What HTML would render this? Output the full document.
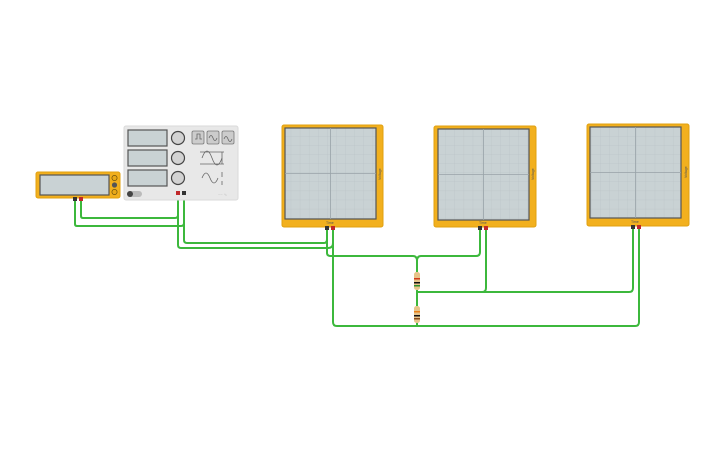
<!DOCTYPE html>
<html><head><style>body{margin:0;background:#fff;width:725px;height:453px;overflow:hidden}</style></head><body>
<svg width="725" height="453" viewBox="0 0 725 453" xmlns="http://www.w3.org/2000/svg" font-family="Liberation Sans, sans-serif">
<defs>
<pattern id="g" width="9.1" height="9.1" patternUnits="userSpaceOnUse"><path d="M9.1 0V9.1H0" fill="none" stroke="#b6bec2" stroke-width="0.5"/></pattern>
</defs>
<g fill="none" stroke="#3cb83c" stroke-width="2" stroke-linejoin="round">
<path d="M81 200V216Q81 218 83 218H175Q178 218 178 215V195"/>
<path d="M75 200V224Q75 226 77 226H181Q184 226 184 223V195"/>
<path d="M178 195V245Q178 248 181 248H328Q333 248 333 243V229"/>
<path d="M184 195V240Q184 243 187 243H324Q327 243 327 239V229"/>
<path d="M327 229V253Q327 256 331 256H413Q417 256 417 261V272"/>
<path d="M480 229V252Q480 256 476 256H421Q417 256 417 261"/>
<path d="M417 290V306"/>
<path d="M417 292H482Q486 292 486 288V229"/>
<path d="M417 292H629Q633 292 633 288V228"/>
<path d="M333 229V322Q333 326 337 326H635Q639 326 639 322V228"/>
<path d="M417 322V326"/>
</g>
<g>
<rect x="414" y="272" width="6" height="18" rx="2.5" fill="#e6c48a"/>
<rect x="414" y="278" width="6" height="1.5" fill="#d03a1a"/>
<rect x="414" y="282" width="6" height="1.5" fill="#111"/>
<rect x="414" y="285" width="6" height="1.5" fill="#2f8f2f"/>
<rect x="414" y="306" width="6" height="17" rx="2.5" fill="#e6c48a"/>
<rect x="414" y="311" width="6" height="1.5" fill="#e8801a"/>
<rect x="414" y="315" width="6" height="1.5" fill="#111"/>
<rect x="414" y="318" width="6" height="1.5" fill="#8a4a1a"/>
</g>
<rect x="36" y="172" width="84" height="26" rx="2" fill="#f2b01e" stroke="#e0a010"/>
<rect x="40" y="175" width="69" height="20" fill="#c9d2d4" stroke="#555" stroke-width="1.2"/>
<circle cx="114.5" cy="178" r="2.6" fill="#e8a818" stroke="#6a5010" stroke-width="0.7"/>
<circle cx="114.5" cy="185" r="2.6" fill="#555"/>
<circle cx="114.5" cy="192" r="2.6" fill="#e8a818" stroke="#6a5010" stroke-width="0.7"/>
<rect x="73" y="197" width="4" height="4" fill="#333"/>
<rect x="79" y="197" width="4" height="4" fill="#c0282a"/>
<rect x="124" y="126" width="114" height="74" rx="2" fill="#e8e8e8" stroke="#dadada"/>
<g fill="#c9d2d4" stroke="#555" stroke-width="1.2">
<rect x="128" y="130" width="39" height="16"/><rect x="128" y="150" width="39" height="16"/><rect x="128" y="170" width="39" height="16"/>
</g>
<g fill="#d2d2d2" stroke="#444" stroke-width="1.2">
<circle cx="178" cy="138" r="6.5"/><circle cx="178" cy="158" r="6.5"/><circle cx="178" cy="178" r="6.5"/>
</g>
<g fill="#ccc" stroke="#777" stroke-width="0.8">
<rect x="192" y="131" width="12" height="13" rx="1.5"/><rect x="207" y="131" width="12" height="13" rx="1.5"/><rect x="222" y="131" width="12" height="13" rx="1.5"/>
</g>
<g fill="none" stroke="#666" stroke-width="0.8">
<path d="M195 139h2v-5h3v5h2"/><path d="M209 138q2-5 4 0t4 0"/><path d="M224 139q2-5 4 0t4 0"/>
<path d="M202 158q5-14 10 0t10 0"/><path d="M200 152h24M200 164h24M222 152v12"/>
<path d="M202 178q4-10 8 0t8 0"/><path d="M222 172v5M222 181v4"/>
</g>
<rect x="127" y="191" width="15" height="6" rx="3" fill="#bbb"/><circle cx="130" cy="194" r="3" fill="#444"/>
<text x="218" y="196" font-size="4" fill="#bbb">~~ ∿</text>
<rect x="176" y="191" width="4" height="4" fill="#c0282a"/>
<rect x="182" y="191" width="4" height="4" fill="#333"/>
<g>
<rect x="282" y="125" width="101" height="102" rx="2" fill="#f2b01e" stroke="#e0a010"/>
<rect x="285" y="128" width="91" height="91" fill="#c9d2d4"/><rect x="285" y="128" width="91" height="91" fill="url(#g)" stroke="#555" stroke-width="1.2"/>
<path d="M330.5 128v91M285 173.5h91" stroke="#99a3a8" stroke-width="0.8"/>
<text x="326" y="224" font-size="3.5" fill="#555">Time</text>
<text transform="translate(381,180) rotate(-90)" font-size="3.5" fill="#555">Voltage</text>
<rect x="325" y="226" width="4" height="4" fill="#333"/><rect x="331" y="226" width="4" height="4" fill="#c0282a"/>
</g>
<g>
<rect x="434" y="126" width="102" height="101" rx="2" fill="#f2b01e" stroke="#e0a010"/>
<rect x="438" y="129" width="91" height="91" fill="#c9d2d4"/><rect x="438" y="129" width="91" height="91" fill="url(#g)" stroke="#555" stroke-width="1.2"/>
<path d="M483.5 129v91M438 174.5h91" stroke="#99a3a8" stroke-width="0.8"/>
<text x="479" y="224" font-size="3.5" fill="#555">Time</text>
<text transform="translate(534,180) rotate(-90)" font-size="3.5" fill="#555">Voltage</text>
<rect x="478" y="226" width="4" height="4" fill="#333"/><rect x="484" y="226" width="4" height="4" fill="#c0282a"/>
</g>
<g>
<rect x="587" y="124" width="102" height="102" rx="2" fill="#f2b01e" stroke="#e0a010"/>
<rect x="590" y="127" width="91" height="91" fill="#c9d2d4"/><rect x="590" y="127" width="91" height="91" fill="url(#g)" stroke="#555" stroke-width="1.2"/>
<path d="M635.5 127v91M590 172.5h91" stroke="#99a3a8" stroke-width="0.8"/>
<text x="631" y="223" font-size="3.5" fill="#555">Time</text>
<text transform="translate(687,178) rotate(-90)" font-size="3.5" fill="#555">Voltage</text>
<rect x="631" y="225" width="4" height="4" fill="#333"/><rect x="637" y="225" width="4" height="4" fill="#c0282a"/>
</g>
</svg>
</body></html>
